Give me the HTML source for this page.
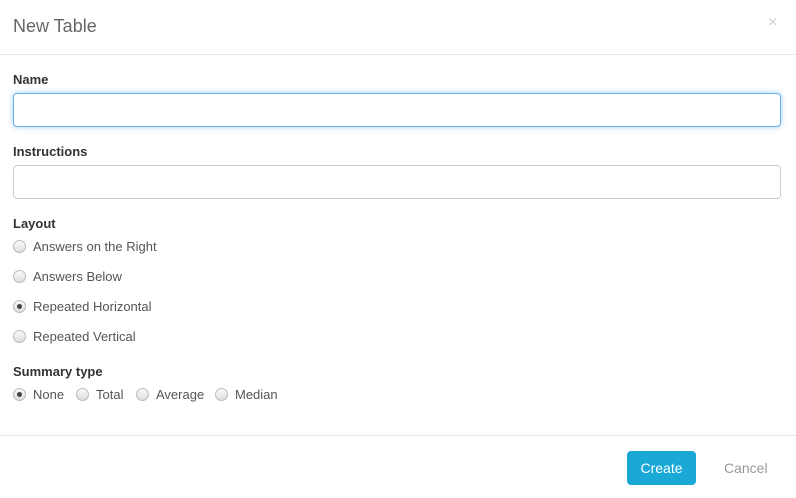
<html><head><style>
body{margin:0;width:796px;height:498px;background:#fff;font-family:"Liberation Sans",sans-serif;color:#333;position:relative;overflow:hidden}
.a{position:absolute}
.lbl{font-weight:bold;font-size:13px;color:#333}
.inp{position:absolute;left:13px;width:766px;height:32px;border:1px solid #ccc;border-radius:4px}
.r{position:absolute;width:11px;height:11px;border:1px solid #bbb;border-radius:50%;background:linear-gradient(#fafafa,#ddd)}
.r.on::after{content:"";position:absolute;left:3px;top:3px;width:5px;height:5px;border-radius:50%;background:#444}
.t{position:absolute;font-size:13px;color:#555}
</style></head><body>
<div class="a" style="left:13px;top:16px;font-size:18px;color:#666">New Table</div>
<div class="a" style="left:768px;top:14px;font-size:16px;color:#ccc">×</div>
<div class="a" style="left:0;top:54px;width:796px;height:1px;background:#e5e5e5"></div>
<div class="a lbl" style="left:13px;top:72px">Name</div>
<div class="inp" style="top:93px;border-color:#66afe9;box-shadow:0 0 6px rgba(102,175,233,.6)"></div>
<div class="a lbl" style="left:13px;top:144px">Instructions</div>
<div class="inp" style="top:165px"></div>
<div class="a lbl" style="left:13px;top:216px">Layout</div>
<div class="r" style="left:13px;top:240px"></div><div class="t" style="left:33px;top:239px">Answers on the Right</div>
<div class="r" style="left:13px;top:270px"></div><div class="t" style="left:33px;top:269px">Answers Below</div>
<div class="r on" style="left:13px;top:300px"></div><div class="t" style="left:33px;top:299px">Repeated Horizontal</div>
<div class="r" style="left:13px;top:330px"></div><div class="t" style="left:33px;top:329px">Repeated Vertical</div>
<div class="a lbl" style="left:13px;top:364px">Summary type</div>
<div class="r on" style="left:13px;top:388px"></div><div class="t" style="left:33px;top:387px">None</div>
<div class="r" style="left:76px;top:388px"></div><div class="t" style="left:96px;top:387px">Total</div>
<div class="r" style="left:136px;top:388px"></div><div class="t" style="left:156px;top:387px">Average</div>
<div class="r" style="left:215px;top:388px"></div><div class="t" style="left:235px;top:387px">Median</div>
<div class="a" style="left:0;top:435px;width:796px;height:1px;background:#e5e5e5"></div>
<div class="a" style="left:627px;top:451px;width:69px;height:34px;background:#1aa9d6;border-radius:4px;color:#fff;font-size:14px;line-height:34px;text-align:center">Create</div>
<div class="a" style="left:724px;top:460px;font-size:14px;color:#999">Cancel</div>
</body></html>
